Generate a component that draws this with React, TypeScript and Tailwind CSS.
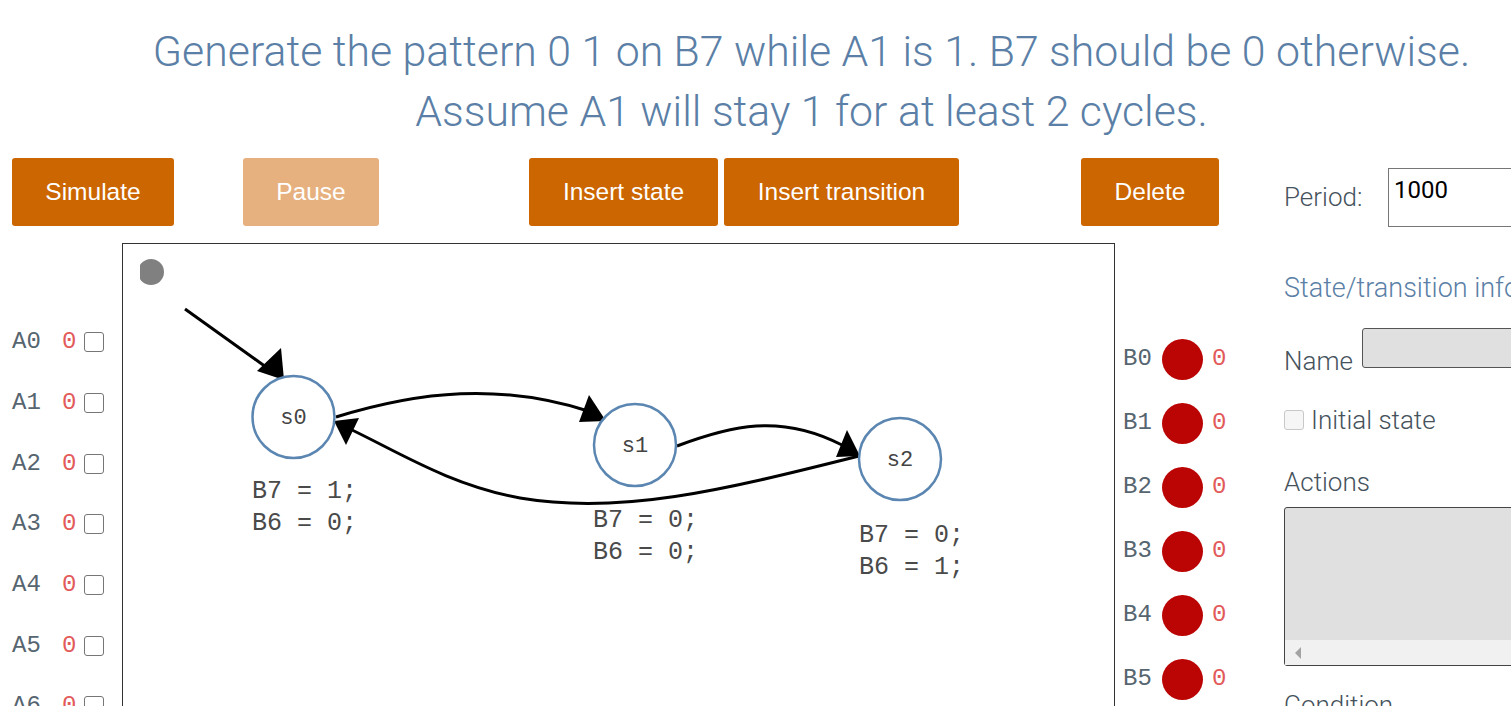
import React from "react";

const inputs = ["A0", "A1", "A2", "A3", "A4", "A5", "A6"];
const outputs = ["B0", "B1", "B2", "B3", "B4", "B5"];

const mono = "font-['Liberation_Mono','Courier_New',monospace]";
const roboto = "font-['Roboto','Liberation_Sans',sans-serif]";

function Btn({ label, w, faded }: { label: string; w: string; faded?: boolean }) {
  return (
    <button
      className={`${w} h-[68px] shrink-0 rounded-[3px] text-[24.5px] text-white font-['Liberation_Sans',Arial,sans-serif] ${
        faded ? "bg-[#e6b17f]" : "bg-[#cc6600]"
      }`}
    >
      {label}
    </button>
  );
}

function Diagram() {
  return (
    <svg width={991} height={600} viewBox="123 243 991 600" className="block">
      <defs>
        <clipPath id="dotclip">
          <rect x="140" y="243" width="100" height="100" />
        </clipPath>
      </defs>

      <circle cx="151" cy="271" r="13" fill="#808080" clipPath="url(#dotclip)" />

      {/* initial arrow */}
      <line x1="185" y1="308" x2="266" y2="366" stroke="#000" strokeWidth="3" />
      <polygon points="284,379 281,347 257,370" fill="#000" />

      {/* s0 -> s1 */}
      <path d="M336 416 C 420 390, 500 382, 588 410" stroke="#000" strokeWidth="3" fill="none" />
      <polygon points="606,420 589,394 579,421" fill="#000" />

      {/* s1 -> s2 */}
      <path d="M677 445 C 730 425, 780 412, 842 444" stroke="#000" strokeWidth="3" fill="none" />
      <polygon points="860,455 847,429 836,456" fill="#000" />

      {/* s2 -> s0 */}
      <path
        d="M859 455 C 720 490, 620 514, 520 497 C 450 484, 400 452, 350 428"
        stroke="#000"
        strokeWidth="3"
        fill="none"
      />
      <polygon points="334,420 346,444 359,417" fill="#000" />

      {[
        { x: 293.5, y: 416, n: "s0" },
        { x: 635, y: 444, n: "s1" },
        { x: 900, y: 458, n: "s2" },
      ].map((s) => (
        <g key={s.n}>
          <circle cx={s.x} cy={s.y} r="41" fill="#fff" stroke="#5b86b2" strokeWidth="2.5" />
          <text
            x={s.x}
            y={s.y + 7}
            textAnchor="middle"
            fontFamily="Liberation Mono, Courier New, monospace"
            fontSize="22"
            fill="#444"
          >
            {s.n}
          </text>
        </g>
      ))}

      {[
        { x: 252, y: 497, a: "B7 = 1;", b: "B6 = 0;" },
        { x: 593, y: 526, a: "B7 = 0;", b: "B6 = 0;" },
        { x: 859, y: 541, a: "B7 = 0;", b: "B6 = 1;" },
      ].map((l, i) => (
        <g key={i} fontFamily="Liberation Mono, Courier New, monospace" fontSize="25" fill="#4a4a4a">
          <text x={l.x} y={l.y}>{l.a}</text>
          <text x={l.x} y={l.y + 32}>{l.b}</text>
        </g>
      ))}
    </svg>
  );
}

export default function App() {
  return (
    <div className="w-screen h-screen overflow-hidden bg-white">
      <div className="w-[1623px]">
        <h1 className={`${roboto} font-light text-[42.8px] leading-[60px] text-[#5b7fa6] text-center pt-[21px]`}>
          Generate the pattern 0 1 on B7 while A1 is 1. B7 should be 0 otherwise.
          <br />
          Assume A1 will stay 1 for at least 2 cycles.
        </h1>

        {/* toolbar */}
        <div className="flex items-start mt-[17px] pl-[12px]">
          <Btn label="Simulate" w="w-[162px]" />
          <div className="w-[69px] shrink-0" />
          <Btn label="Pause" w="w-[136px]" faded />
          <div className="w-[150px] shrink-0" />
          <Btn label="Insert state" w="w-[189px]" />
          <div className="w-[6px] shrink-0" />
          <Btn label="Insert transition" w="w-[235px]" />
          <div className="w-[122px] shrink-0" />
          <Btn label="Delete" w="w-[138px]" />
          <div className="flex items-center ml-[65px] mt-[10px]">
            <span className={`${roboto} font-light text-[26px] text-[#45525c] w-[104px]`}>Period:</span>
            <div className={`w-[200px] h-[59px] border border-[#767676] px-[5px] pt-[3px] text-[24px] text-black ${roboto}`}>
              1000
            </div>
          </div>
        </div>

        {/* main */}
        <div className="flex mt-[16px]">
          {/* inputs */}
          <div className="w-[122px] shrink-0 pt-[69px]">
            {inputs.map((a) => (
              <div key={a} className="h-[60.7px] flex items-center pl-[12px]">
                <span className={`${mono} text-[24px] text-[#56656f] w-[50px]`}>{a}</span>
                <span className={`${mono} text-[24px] text-[#e25a5a] w-[22px]`}>0</span>
                <span className="w-[20px] h-[20px] rounded-[3px] border border-[#767676] bg-white" />
              </div>
            ))}
          </div>

          {/* canvas */}
          <div className="w-[993px] h-[600px] shrink-0 border border-[#333] overflow-hidden">
            <Diagram />
          </div>

          {/* outputs */}
          <div className="w-[169px] shrink-0 pt-[84px]">
            {outputs.map((b) => (
              <div key={b} className="h-[64px] flex items-center pl-[8px]">
                <span className={`${mono} text-[24px] text-[#56656f] w-[39px]`}>{b}</span>
                <span className="w-[41px] h-[41px] rounded-full bg-[#bb0505]" />
                <span className={`${mono} text-[24px] text-[#e25a5a] ml-[9px]`}>0</span>
              </div>
            ))}
          </div>

          {/* info panel */}
          <div className={`w-[300px] shrink-0 ${roboto} font-light text-[26px] text-[#45525c]`}>
            <div className="mt-[30px] h-[30px] leading-[30px] text-[27px] text-[#5b7fa6] whitespace-nowrap">
              State/transition info
            </div>
            <div className="flex items-start mt-[25px]">
              <span className="w-[78px] leading-[30px] pt-[18px]">Name</span>
              <div className="w-[200px] h-[40px] rounded-[3px] border border-[#555] bg-[#e0e0e0]" />
            </div>
            <div className="flex items-center mt-[29px]">
              <span className="w-[20px] h-[20px] rounded-[3px] border border-[#c8c8c8] bg-[#f6f6f6]" />
              <span className="ml-[7px] leading-[30px]">Initial state</span>
            </div>
            <div className="mt-[32px] leading-[30px]">Actions</div>
            <div className="mt-[10px] h-[159px] w-[260px] rounded-[3px] border border-[#444] bg-[#e0e0e0] flex flex-col">
              <div className="flex-1" />
              <div className="h-[25px] bg-[#f1f1f1] flex items-center pl-[10px]">
                <span className="w-0 h-0 border-y-[6px] border-y-transparent border-r-[6px] border-r-[#a3a3a3]" />
              </div>
            </div>
            <div className="mt-[24px] leading-[30px]">Condition</div>
          </div>
        </div>
      </div>
    </div>
  );
}
